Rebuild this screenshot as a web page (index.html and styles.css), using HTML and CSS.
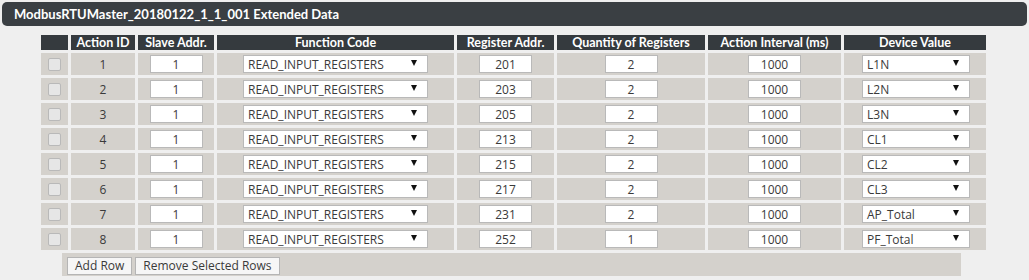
FILE: index.html
```html
<!DOCTYPE html>
<html>
<head>
<meta charset="utf-8">
<link rel="stylesheet" href="styles.css">
</head>
<body>
<div class="titlebar">ModbusRTUMaster_20180122_1_1_001 Extended Data</div>
<table class="grid">
  <colgroup>
    <col class="c1"><col class="c2"><col class="c3"><col class="c4"><col class="c5"><col class="c6"><col class="c7"><col class="c8">
  </colgroup>
  <thead>
    <tr><th></th><th>Action ID</th><th>Slave Addr.</th><th>Function Code</th><th>Register Addr.</th><th>Quantity of Registers</th><th>Action Interval (ms)</th><th>Device Value</th></tr>
  </thead>
  <tbody>
    <tr><td><span class="chk"></span></td><td class="id">1</td><td><input class="num" value="1"></td><td><div class="sel fc"><span>READ_INPUT_REGISTERS</span><svg class="arr" width="6" height="6" viewBox="0 0 6 6"><polygon points="0,0 6,0 3,6"/></svg></div></td><td><input class="num" value="201"></td><td><input class="num" value="2"></td><td><input class="num" value="1000"></td><td><div class="sel dv"><span>L1N</span><svg class="arr" width="6" height="6" viewBox="0 0 6 6"><polygon points="0,0 6,0 3,6"/></svg></div></td></tr>
    <tr><td><span class="chk"></span></td><td class="id">2</td><td><input class="num" value="1"></td><td><div class="sel fc"><span>READ_INPUT_REGISTERS</span><svg class="arr" width="6" height="6" viewBox="0 0 6 6"><polygon points="0,0 6,0 3,6"/></svg></div></td><td><input class="num" value="203"></td><td><input class="num" value="2"></td><td><input class="num" value="1000"></td><td><div class="sel dv"><span>L2N</span><svg class="arr" width="6" height="6" viewBox="0 0 6 6"><polygon points="0,0 6,0 3,6"/></svg></div></td></tr>
    <tr><td><span class="chk"></span></td><td class="id">3</td><td><input class="num" value="1"></td><td><div class="sel fc"><span>READ_INPUT_REGISTERS</span><svg class="arr" width="6" height="6" viewBox="0 0 6 6"><polygon points="0,0 6,0 3,6"/></svg></div></td><td><input class="num" value="205"></td><td><input class="num" value="2"></td><td><input class="num" value="1000"></td><td><div class="sel dv"><span>L3N</span><svg class="arr" width="6" height="6" viewBox="0 0 6 6"><polygon points="0,0 6,0 3,6"/></svg></div></td></tr>
    <tr><td><span class="chk"></span></td><td class="id">4</td><td><input class="num" value="1"></td><td><div class="sel fc"><span>READ_INPUT_REGISTERS</span><svg class="arr" width="6" height="6" viewBox="0 0 6 6"><polygon points="0,0 6,0 3,6"/></svg></div></td><td><input class="num" value="213"></td><td><input class="num" value="2"></td><td><input class="num" value="1000"></td><td><div class="sel dv"><span>CL1</span><svg class="arr" width="6" height="6" viewBox="0 0 6 6"><polygon points="0,0 6,0 3,6"/></svg></div></td></tr>
    <tr><td><span class="chk"></span></td><td class="id">5</td><td><input class="num" value="1"></td><td><div class="sel fc"><span>READ_INPUT_REGISTERS</span><svg class="arr" width="6" height="6" viewBox="0 0 6 6"><polygon points="0,0 6,0 3,6"/></svg></div></td><td><input class="num" value="215"></td><td><input class="num" value="2"></td><td><input class="num" value="1000"></td><td><div class="sel dv"><span>CL2</span><svg class="arr" width="6" height="6" viewBox="0 0 6 6"><polygon points="0,0 6,0 3,6"/></svg></div></td></tr>
    <tr><td><span class="chk"></span></td><td class="id">6</td><td><input class="num" value="1"></td><td><div class="sel fc"><span>READ_INPUT_REGISTERS</span><svg class="arr" width="6" height="6" viewBox="0 0 6 6"><polygon points="0,0 6,0 3,6"/></svg></div></td><td><input class="num" value="217"></td><td><input class="num" value="2"></td><td><input class="num" value="1000"></td><td><div class="sel dv"><span>CL3</span><svg class="arr" width="6" height="6" viewBox="0 0 6 6"><polygon points="0,0 6,0 3,6"/></svg></div></td></tr>
    <tr><td><span class="chk"></span></td><td class="id">7</td><td><input class="num" value="1"></td><td><div class="sel fc"><span>READ_INPUT_REGISTERS</span><svg class="arr" width="6" height="6" viewBox="0 0 6 6"><polygon points="0,0 6,0 3,6"/></svg></div></td><td><input class="num" value="231"></td><td><input class="num" value="2"></td><td><input class="num" value="1000"></td><td><div class="sel dv"><span>AP_Total</span><svg class="arr" width="6" height="6" viewBox="0 0 6 6"><polygon points="0,0 6,0 3,6"/></svg></div></td></tr>
    <tr><td><span class="chk"></span></td><td class="id">8</td><td><input class="num" value="1"></td><td><div class="sel fc"><span>READ_INPUT_REGISTERS</span><svg class="arr" width="6" height="6" viewBox="0 0 6 6"><polygon points="0,0 6,0 3,6"/></svg></div></td><td><input class="num" value="252"></td><td><input class="num" value="1"></td><td><input class="num" value="1000"></td><td><div class="sel dv"><span>PF_Total</span><svg class="arr" width="6" height="6" viewBox="0 0 6 6"><polygon points="0,0 6,0 3,6"/></svg></div></td></tr>
  </tbody>
</table>
<div class="btnbar">
  <button class="btn">Add Row</button>
  <button class="btn">Remove Selected Rows</button>
</div>
</body>
</html>
```
FILE: styles.css
```css
html, body {
  margin: 0;
  padding: 0;
  background: #efefef;
  width: 1029px;
  height: 280px;
  overflow: hidden;
}
.titlebar {
  margin: 2px 2px 0 2px;
  height: 24px;
  box-sizing: border-box;
  background: #3a3f43;
  border-radius: 5px;
  color: #fff;
  font-family: Lato, "Open Sans", sans-serif;
  font-weight: bold;
  font-size: 13px;
  line-height: 24px;
  padding-left: 12px;
}
.grid {
  border-collapse: separate;
  border-spacing: 3px;
  margin: 6px 0 0 38px;
  table-layout: fixed;
  width: 951px;
}
.c1 { width: 27px; }
.c2 { width: 64px; }
.c3 { width: 76px; }
.c4 { width: 237px; }
.c5 { width: 97px; }
.c6 { width: 148px; }
.c7 { width: 133px; }
.c8 { width: 142px; }
.grid th {
  background: #353a3e;
  color: #fff;
  font-family: Lato, "Open Sans", sans-serif;
  font-weight: bold;
  font-size: 12.5px;
  height: 15px;
  line-height: 15px;
  padding: 0;
  text-align: center;
  white-space: nowrap;
}
.grid td {
  background: #d4d1cc;
  height: 22px;
  padding: 0;
  text-align: center;
  vertical-align: middle;
  font-family: "Open Sans", sans-serif;
  font-size: 12px;
  color: #3a3a3a;
}
.chk {
  display: inline-block;
  width: 11px;
  height: 11px;
  border: 1px solid #b9b9b9;
  border-radius: 2px;
  background: #e6e6e6;
  vertical-align: middle;
  margin-top: -1px;
}
.num {
  display: inline-block;
  width: 53px;
  height: 18px;
  box-sizing: border-box;
  border: 1px solid #b9b9b9;
  background: #fff;
  font-family: "Open Sans", sans-serif;
  font-size: 12px;
  color: #3a3a3a;
  text-align: center;
  padding: 0;
  margin: 0;
  vertical-align: middle;
  outline: none;
}
.sel {
  display: inline-flex;
  align-items: center;
  justify-content: space-between;
  height: 18px;
  box-sizing: border-box;
  border: 1px solid #b9b9b9;
  background: #fff;
  padding: 0 10px 0 4px;
  vertical-align: middle;
  text-align: left;
  font-family: "Open Sans", sans-serif;
  font-size: 12px;
  color: #3a3a3a;
}
.sel.fc { width: 185px; }
.sel.dv { width: 108px; margin-left: 2px; }
.arr { fill: #111; margin-top: -2px; }
.btnbar {
  margin: 0 0 0 62px;
  width: 899px;
  height: 23px;
  background: #d4d1cc;
  display: flex;
  align-items: flex-start;
  gap: 3px;
  padding: 4px 0 0 5px;
  box-sizing: border-box;
}
.btn {
  height: 18px;
  box-sizing: border-box;
  border: 1px solid #b5b5b5;
  background: #f6f6f6;
  font-family: "Open Sans", sans-serif;
  font-size: 12px;
  color: #3a3a3a;
  padding: 0 7px;
  margin: 0;
  line-height: 16px;
}
```
